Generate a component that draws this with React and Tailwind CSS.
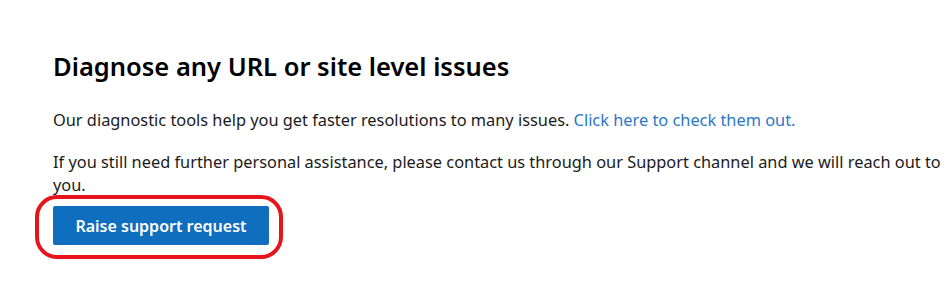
import React from 'react';

const App = () => {
  return (
    <div className="min-h-screen w-[951px] h-[298px] bg-white text-[#1b1b1b] font-['Segoe_UI','Noto_Sans',sans-serif] overflow-hidden">
      <div className="pl-[53px] pt-[49px]">
        <h2 className="text-[25.5px] leading-[34px] font-semibold text-black">
          Diagnose any URL or site level issues
        </h2>

        <p className="mt-[26px] text-[16.35px] leading-[22px]">
          Our diagnostic tools help you get faster resolutions to many issues.{' '}
          <a href="#" className="text-[#2b78c9]">Click here to check them out.</a>
        </p>

        <p className="mt-[20px] text-[16.35px] leading-[23px]">
          If you still need further personal assistance, please contact us through our Support channel and we will reach out to you.
        </p>

        {/* Highlighted button */}
        <div className="relative mt-[9px] inline-block">
          <button className="h-[39px] w-[216px] rounded-[2px] bg-[#106ebe] text-white text-[16px] font-semibold">
            Raise support request
          </button>
          <div className="pointer-events-none absolute -left-[18px] -top-[11px] w-[248px] h-[64px] rounded-[22px] border-[4px] border-[#e8141c]" />
        </div>
      </div>
    </div>
  );
};

export default App;
